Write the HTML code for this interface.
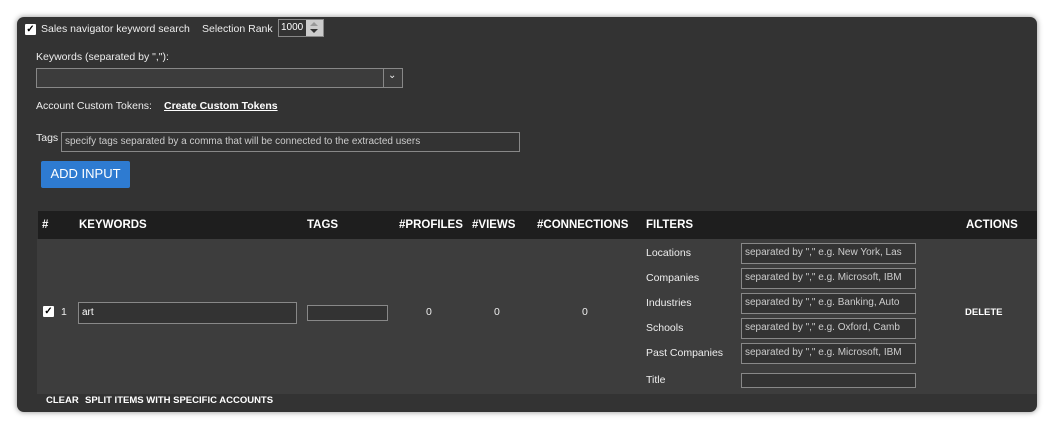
<!DOCTYPE html>
<html><head><style>
body{margin:0;width:1054px;height:430px;background:#fff;position:relative;overflow:hidden;font-family:"Liberation Sans",sans-serif;color:#fff}
.a{position:absolute}
.panel{left:17px;top:17px;width:1020px;height:395px;background:#333;border-radius:7px;box-shadow:0 0 6px rgba(0,0,0,.45)}
.t{position:absolute;font-size:10.5px;white-space:nowrap;color:#eee}
.b{font-weight:bold;font-size:11.5px;color:#fff}
.inp{position:absolute;border:1px solid #888;background:#333;box-sizing:border-box;font-size:10px;color:#ccc;padding-left:3px;white-space:nowrap;overflow:hidden;line-height:18px}
.cb{position:absolute;width:11px;height:11px;background:#fff;border-radius:1px;color:#000;font-size:10px;line-height:11px;text-align:center;font-weight:bold}
</style></head><body>
<div class="a panel"></div>
<div class="cb" style="left:25px;top:24px">✓</div>
<div class="t" style="left:41px;top:23px">Sales navigator keyword search</div>
<div class="t" style="left:202px;top:23px">Selection Rank</div>
<div class="inp" style="left:278px;top:19px;width:46px;height:18px;line-height:15px;color:#fff;padding-left:2px">1000</div>
<div class="a" style="left:306px;top:20px;width:17px;height:16px;background:#ccc"></div>
<div class="a" style="left:310px;top:29px;width:0;height:0;border-left:4px solid transparent;border-right:4px solid transparent;border-top:4px solid #333"></div>
<div class="a" style="left:310px;top:22px;width:0;height:0;border-left:4px solid transparent;border-right:4px solid transparent;border-bottom:4px solid #999"></div>
<div class="t" style="left:36px;top:51px">Keywords (separated by ","):</div>
<div class="inp" style="left:36px;top:68px;width:367px;height:20px;background:#3c3c3c"></div>
<div class="a" style="left:383px;top:69px;width:1px;height:18px;background:#888"></div>
<div class="t" style="left:388px;top:70px;font-size:10px">⌄</div>
<div class="t" style="left:36px;top:100px">Account Custom Tokens:</div>
<div class="t" style="left:164px;top:100px;font-weight:bold;text-decoration:underline;color:#fff">Create Custom Tokens</div>
<div class="t" style="left:36px;top:132px">Tags</div>
<div class="inp" style="left:61px;top:132px;width:459px;height:20px;line-height:18px">specify tags separated by a comma that will be connected to the extracted users</div>
<div class="a" style="left:41px;top:161px;width:89px;height:27px;background:#2e7bd1;border-radius:2px;font-size:13px;line-height:26px;text-align:center">ADD INPUT</div>
<div class="a" style="left:38px;top:211px;width:999px;height:28px;background:#1e1e1e"></div>
<div class="a" style="left:37px;top:239px;width:1000px;height:155px;background:#3d3d3d"></div>
<div class="t b" style="left:42px;top:219px">#</div>
<div class="t b" style="left:79px;top:219px">KEYWORDS</div>
<div class="t b" style="left:307px;top:219px">TAGS</div>
<div class="t b" style="left:399px;top:219px">#PROFILES</div>
<div class="t b" style="left:472px;top:219px">#VIEWS</div>
<div class="t b" style="left:537px;top:219px">#CONNECTIONS</div>
<div class="t b" style="left:646px;top:219px">FILTERS</div>
<div class="t b" style="left:966px;top:219px">ACTIONS</div>
<div class="cb" style="left:43px;top:306px">✓</div>
<div class="t" style="left:61px;top:306px">1</div>
<div class="inp" style="left:78px;top:302px;width:219px;height:22px;line-height:20px;color:#fff;background:#333">art</div>
<div class="inp" style="left:307px;top:305px;width:81px;height:16px;background:#333"></div>
<div class="t" style="left:426px;top:306px">0</div>
<div class="t" style="left:494px;top:306px">0</div>
<div class="t" style="left:582px;top:306px">0</div>
<div class="t" style="left:646px;top:247px">Locations</div>
<div class="t" style="left:646px;top:272px">Companies</div>
<div class="t" style="left:646px;top:297px">Industries</div>
<div class="t" style="left:646px;top:322px">Schools</div>
<div class="t" style="left:646px;top:347px">Past Companies</div>
<div class="t" style="left:646px;top:374px">Title</div>
<div class="inp" style="left:741px;top:243px;width:175px;height:21px">separated by "," e.g. New York, Las</div>
<div class="inp" style="left:741px;top:268px;width:175px;height:21px">separated by "," e.g. Microsoft, IBM</div>
<div class="inp" style="left:741px;top:293px;width:175px;height:21px">separated by "," e.g. Banking, Auto</div>
<div class="inp" style="left:741px;top:318px;width:175px;height:21px">separated by "," e.g. Oxford, Camb</div>
<div class="inp" style="left:741px;top:343px;width:175px;height:21px">separated by "," e.g. Microsoft, IBM</div>
<div class="inp" style="left:741px;top:373px;width:175px;height:15px"></div>
<div class="t b" style="left:965px;top:307px;font-size:9.5px">DELETE</div>
<div class="t b" style="left:46px;top:395px;font-size:9.5px">CLEAR</div>
<div class="t b" style="left:85px;top:395px;font-size:9.5px">SPLIT ITEMS WITH SPECIFIC ACCOUNTS</div>
</body></html>
